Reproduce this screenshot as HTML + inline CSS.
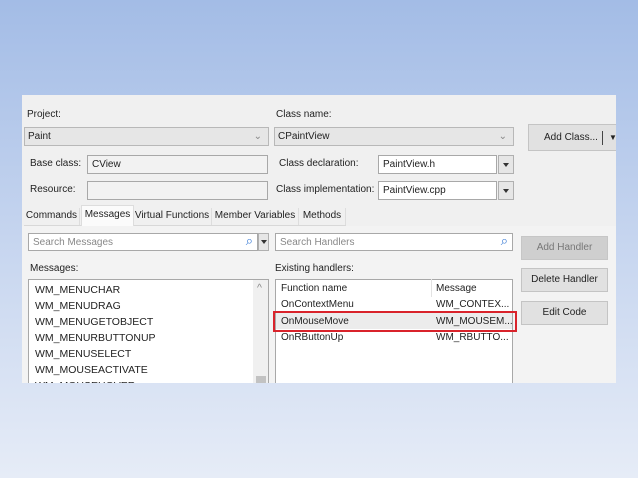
<!DOCTYPE html><html><head><style>
body{margin:0;width:638px;height:478px;overflow:hidden;background:linear-gradient(#a3bce6,#c6d5ef 50%,#e6ecf7);font-family:"Liberation Sans",sans-serif;font-size:10px;color:#222;position:relative}
.a{position:absolute}
.p{left:22px;top:95px;width:594px;height:288px;background:#f0f0f0;overflow:hidden}
.in{position:absolute;background:#fff;border:1px solid #a8a8a8;box-sizing:border-box;padding:2px 4px;line-height:13px}
.cb{position:absolute;background:#e6e6e6;border:1px solid #b8b8b8;box-sizing:border-box;padding:2px 3px;line-height:13px}
.btn{position:absolute;background:#e1e1e1;border:1px solid #c4c4c4;box-sizing:border-box;text-align:center}
.dd{position:absolute;background:#e6e6e6;border:1px solid #b0b0b0;box-sizing:border-box}
.dd:after{content:"";position:absolute;left:50%;top:50%;margin:-2px 0 0 -3px;border:3px solid transparent;border-top:4px solid #333}
.g{color:#888}
.s{font-size:13px;color:#3a7bd5}
</style></head><body>
<div class="a p">
<div class="a" style="left:5px;top:14px">Project:</div>
<div class="cb" style="left:2px;top:32px;width:245px;height:19px">Paint<span class="a g" style="right:6px;top:2px">⌄</span></div>
<div class="a" style="left:254px;top:14px">Class name:</div>
<div class="cb" style="left:252px;top:32px;width:240px;height:19px">CPaintView<span class="a g" style="right:6px;top:2px">⌄</span></div>
<div class="btn" style="left:506px;top:29px;width:90px;height:27px;line-height:25px;text-align:left;padding-left:15px">Add Class...<span class="a" style="left:73px;top:6px;width:1px;height:14px;background:#444"></span><span class="a" style="left:80px;top:0;font-size:8px">▼</span></div>
<div class="a" style="left:8px;top:63px">Base class:</div>
<div class="in" style="left:65px;top:60px;width:181px;height:19px;background:#f2f2f2">CView</div>
<div class="a" style="left:257px;top:63px">Class declaration:</div>
<div class="in" style="left:356px;top:60px;width:119px;height:19px">PaintView.h</div>
<div class="dd" style="left:476px;top:60px;width:16px;height:19px"></div>
<div class="a" style="left:8px;top:89px">Resource:</div>
<div class="in" style="left:65px;top:86px;width:181px;height:19px;background:#f2f2f2"></div>
<div class="a" style="left:254px;top:89px">Class implementation:</div>
<div class="in" style="left:356px;top:86px;width:119px;height:19px">PaintView.cpp</div>
<div class="dd" style="left:476px;top:86px;width:16px;height:19px"></div>
<div class="a" style="left:2px;top:112px;width:322px;height:18px;border-bottom:1px solid #d8d8d8"></div>
<div class="a" style="left:2px;top:113px;width:55px;height:17px;line-height:16px;text-align:center;border-right:1px solid #ddd">Commands</div>
<div class="a" style="left:59px;top:110px;width:51px;height:20px;line-height:18px;background:#fbfbfb;border:1px solid #ddd;border-bottom:none;text-align:center">Messages</div>
<div class="a" style="left:111px;top:113px;width:78px;height:17px;line-height:16px;text-align:center;border-right:1px solid #ddd">Virtual Functions</div>
<div class="a" style="left:190px;top:113px;width:86px;height:17px;line-height:16px;text-align:center;border-right:1px solid #ddd">Member Variables</div>
<div class="a" style="left:277px;top:113px;width:46px;height:17px;line-height:16px;text-align:center;border-right:1px solid #ddd">Methods</div>
<div class="a" style="left:0;top:131px;width:594px;height:160px;background:#f3f3f3"></div>
<div class="in g" style="left:6px;top:138px;width:230px;height:18px">Search Messages<span class="a s" style="right:4px;top:0">⌕</span></div>
<div class="dd" style="left:236px;top:138px;width:11px;height:18px"></div>
<div class="in g" style="left:253px;top:138px;width:238px;height:18px">Search Handlers<span class="a s" style="right:4px;top:0">⌕</span></div>
<div class="btn" style="left:499px;top:141px;width:87px;height:24px;line-height:22px;background:#cfcfcf;color:#777;border-color:#c6c6c6">Add Handler</div>
<div class="a" style="left:8px;top:168px">Messages:</div>
<div class="a" style="left:253px;top:168px">Existing handlers:</div>
<div class="in" style="left:6px;top:184px;width:241px;height:120px;padding:2px 6px;line-height:16px;font-size:10.5px">WM_MENUCHAR<br>WM_MENUDRAG<br>WM_MENUGETOBJECT<br>WM_MENURBUTTONUP<br>WM_MENUSELECT<br>WM_MOUSEACTIVATE<br>WM_MOUSEHOVER
<div class="a" style="right:0;top:0;width:15px;height:120px;background:#f0f0f0"><div class="a g" style="left:4px;top:0">^</div><div class="a" style="left:3px;top:96px;width:10px;height:20px;background:#c2c2c2"></div></div></div>
<div class="in" style="left:253px;top:184px;width:238px;height:120px;padding:0"></div>
<div class="a" style="left:259px;top:188px">Function name</div>
<div class="a" style="left:409px;top:184px;width:1px;height:18px;background:#e2e2e2"></div>
<div class="a" style="left:414px;top:188px">Message</div>
<div class="a" style="left:259px;top:204px">OnContextMenu</div><div class="a" style="left:414px;top:204px">WM_CONTEX...</div>
<div class="a" style="left:254px;top:218px;width:236px;height:16px;background:#ececec"></div>
<div class="a" style="left:259px;top:221px">OnMouseMove</div><div class="a" style="left:414px;top:221px">WM_MOUSEM...</div>
<div class="a" style="left:259px;top:237px">OnRButtonUp</div><div class="a" style="left:414px;top:237px">WM_RBUTTO...</div>
<div class="a" style="left:251px;top:216px;width:240px;height:17px;border:2px solid #d9232b"></div>
<div class="btn" style="left:499px;top:173px;width:87px;height:24px;line-height:22px">Delete Handler</div>
<div class="btn" style="left:499px;top:206px;width:87px;height:24px;line-height:22px">Edit Code</div>
</div>
</body></html>
